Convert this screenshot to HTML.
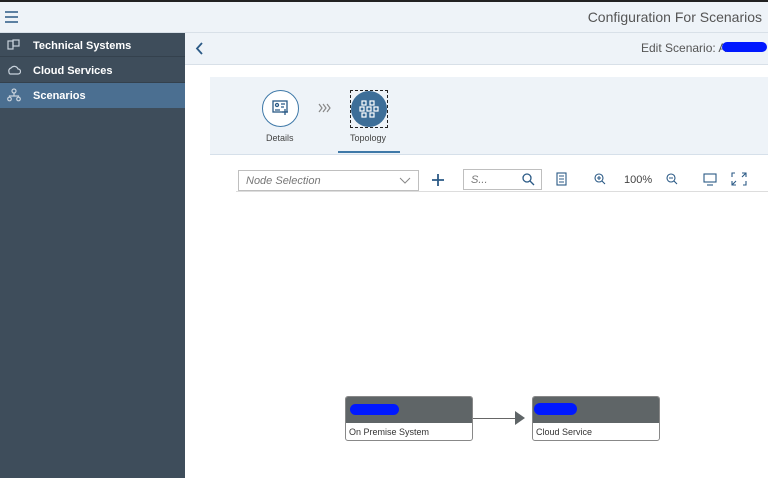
<!DOCTYPE html>
<html><head><style>
body{margin:0;width:768px;height:478px;overflow:hidden;background:#fff;font-family:"Liberation Sans",sans-serif;position:relative}
div{position:absolute;box-sizing:border-box}
.t{font-size:11px;color:#fff;font-weight:bold}
</style></head><body>
<div style="left:0;top:0;width:768px;height:2px;background:#222"></div>
<div style="left:0;top:2px;width:768px;height:31px;background:#eef3f8;border-bottom:1px solid #d8e0e8"></div>
<svg style="position:absolute;left:4px;top:10px" width="16" height="14" stroke="#2b5a86" stroke-width="1.6"><path d="M1 2h13M1 7h13M1 12h13"/></svg>
<div style="right:6px;top:9px;font-size:14px;color:#555">Configuration For Scenarios</div>
<div style="left:0;top:33px;width:185px;height:445px;background:#3e4d5b"></div>
<div style="left:0;top:33px;width:185px;height:24px;border-bottom:1px solid #34414d"></div>
<div style="left:0;top:58px;width:185px;height:25px;border-bottom:1px solid #34414d"></div>
<div style="left:0;top:83px;width:185px;height:25px;background:#4b6f91"></div>
<div class="t" style="left:33px;top:40px">Technical Systems</div>
<div class="t" style="left:33px;top:65px">Cloud Services</div>
<div class="t" style="left:33px;top:90px">Scenarios</div>
<svg style="position:absolute;left:7px;top:39px" width="14" height="64" fill="none" stroke="#c8d2dc" stroke-width="1.2">
<rect x="1" y="2" width="5" height="8"/><rect x="6" y="1" width="6" height="6"/>
<path d="M2 33 a3 3 0 0 1 2-4 a4 4 0 0 1 7 1 a2.5 2.5 0 0 1 0 5 h-8 a2 2 0 0 1 -1-2z"/>
<circle cx="7" cy="52" r="2"/><circle cx="2.5" cy="60" r="1.8"/><circle cx="11.5" cy="60" r="1.8"/><path d="M7 54v3M2.5 58v-1h9v1"/>
</svg>
<div style="left:185px;top:33px;width:583px;height:32px;background:#eef3f8;border-bottom:1px solid #d8e0e8"></div>
<svg style="position:absolute;left:195px;top:42px" width="10" height="14" fill="none" stroke="#2b5a86" stroke-width="1.8"><path d="M7 1L2 6.5L7 12"/></svg>
<div style="left:641px;top:41px;font-size:12px;color:#555">Edit Scenario: A</div>
<div style="left:722px;top:42px;width:45px;height:10px;background:#0018ff;border-radius:5px"></div>
<div style="left:210px;top:77px;width:558px;height:78px;background:#eef3f8;border-bottom:1px solid #d6e0ea"></div>
<div style="left:262px;top:90px;width:37px;height:37px;border:1px solid #3f79a8;border-radius:50%;background:#fff"></div>
<svg style="position:absolute;left:272px;top:100px" width="18" height="16" fill="none" stroke="#2b5a86" stroke-width="1.3"><rect x="1" y="1" width="14" height="11"/><circle cx="5" cy="5" r="1.5"/><path d="M3 10h5M9 4h4M9 7h3M13 9v6M10 12h6"/></svg>
<div style="left:266px;top:133px;font-size:9px;color:#444">Details</div>
<svg style="position:absolute;left:318px;top:103px" width="14" height="10" fill="none" stroke="#888" stroke-width="1.2"><path d="M1 1l3 4l-3 4M5 1l3 4l-3 4M9 1l3 4l-3 4"/></svg>
<div style="left:350px;top:90px;width:38px;height:38px;border:1px dashed #222"></div>
<div style="left:351px;top:91px;width:36px;height:36px;border-radius:50%;background:#3d6e98"></div>
<svg style="position:absolute;left:359px;top:99px" width="20" height="20" fill="none" stroke="#fff" stroke-width="1.2"><rect x="3" y="2" width="4" height="4"/><rect x="11" y="2" width="4" height="4"/><rect x="1" y="8" width="4" height="4"/><rect x="8" y="8" width="4" height="4"/><rect x="15" y="8" width="4" height="4"/><rect x="3" y="14" width="4" height="4"/><rect x="11" y="14" width="4" height="4"/></svg>
<div style="left:350px;top:133px;font-size:9px;color:#444">Topology</div>
<div style="left:338px;top:151px;width:62px;height:2px;background:#3f79a8"></div>
<div style="left:236px;top:191px;width:532px;height:1px;background:#ddd"></div>
<div style="left:238px;top:170px;width:181px;height:21px;border:1px solid #bfbfbf;background:#fff"></div>
<div style="left:246px;top:175px;font-size:11px;font-style:italic;color:#777">Node Selection</div>
<svg style="position:absolute;left:399px;top:177px" width="12" height="8" fill="none" stroke="#888" stroke-width="1"><path d="M1 1l5 5l5-5"/></svg>
<svg style="position:absolute;left:431px;top:173px" width="14" height="14" stroke="#2b5a86" stroke-width="1.8"><path d="M7 1v12M1 7h12"/></svg>
<div style="left:463px;top:169px;width:79px;height:21px;border:1px solid #bfbfbf;background:#fff"></div>
<div style="left:471px;top:174px;font-size:11px;font-style:italic;color:#777">S...</div>
<svg style="position:absolute;left:520px;top:172px" width="100" height="16" fill="none" stroke="#2b5a86" stroke-width="1.3"><circle cx="7" cy="6" r="4"/><path d="M10 9l4 4"/></svg>
<svg style="position:absolute;left:556px;top:172px" width="200" height="16" fill="none" stroke="#2b5a86" stroke-width="1.1">
<rect x="1" y="1" width="9" height="12"/><path d="M3 4h5M3 7h5M3 10h5"/>
<circle cx="43" cy="6" r="4"/><path d="M46 9l3 3M41 6h4M43 4v4"/>
<circle cx="115" cy="6" r="4"/><path d="M118 9l3 3M113 6h4"/>
<rect x="148" y="2" width="12" height="8"/><path d="M151 13h6"/>
<path d="M186 1h4v4M190 1l-4 4M180 13h-4v-4M176 13l4-4M176 5v-4h3M190 9v4h-3"/>
</svg>
<div style="left:624px;top:174px;font-size:11px;color:#444">100%</div>
<div style="left:345px;top:396px;width:128px;height:45px;border:1px solid #888;border-radius:3px;background:#fff;overflow:hidden">
<div style="left:0;top:0;width:128px;height:26px;background:#5f6567"></div>
<div style="left:4px;top:7px;width:49px;height:11px;background:#0018ff;border-radius:6px"></div>
<div style="left:3px;top:30px;font-size:9px;color:#333">On Premise System</div></div>
<div style="left:532px;top:396px;width:128px;height:45px;border:1px solid #888;border-radius:3px;background:#fff;overflow:hidden">
<div style="left:0;top:0;width:128px;height:26px;background:#5f6567"></div>
<div style="left:1px;top:6px;width:43px;height:12px;background:#0018ff;border-radius:6px"></div>
<div style="left:3px;top:30px;font-size:9px;color:#333">Cloud Service</div></div>
<div style="left:473px;top:418px;width:45px;height:1px;background:#666"></div>
<svg style="position:absolute;left:515px;top:411px" width="12" height="14"><path d="M0 0L10 7L0 14z" fill="#5f6567"/></svg>
</body></html>
